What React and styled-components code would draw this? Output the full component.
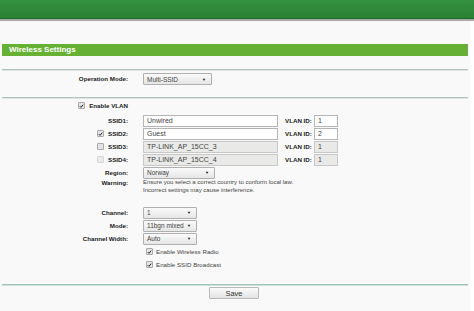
import styled, { createGlobalStyle } from "styled-components";

const GlobalStyle = createGlobalStyle`
    html, body {
        margin: 0;
        padding: 0;
        background: #ffffff;
        font-family: "Liberation Sans", Arial, sans-serif;
    }
`;

const Check = ({ checked, disabled }) => (
    <CheckBox $disabled={disabled}>
        {checked && (
            <svg width="6" height="6" viewBox="0 0 6 6">
                <path d="M1 3.2 L2.4 4.6 L5 1.4" fill="none" stroke="#222" strokeWidth="1.2" />
            </svg>
        )}
    </CheckBox>
);

const Select = ({ value, width }) => (
    <SelectBox $w={width}>
        <span>{value}</span>
        <Arrow>▼</Arrow>
    </SelectBox>
);

const ssids = [
    { label: "SSID1:", value: "Unwired", vlan: "1" },
    { label: "SSID2:", value: "Guest", vlan: "2", check: "on" },
    { label: "SSID3:", value: "TP-LINK_AP_15CC_3", vlan: "1", check: "off", disabled: true },
    { label: "SSID4:", value: "TP-LINK_AP_15CC_4", vlan: "1", check: "dis", disabled: true },
];

const App = () => {
    return (
        <Page>
            <GlobalStyle />
            <Header />
            <Content>
                <TitleBar>Wireless Settings</TitleBar>
                <Divider $mt={13} />
                <Row $mt={2} $h={14}>
                    <Label>Operation Mode:</Label>
                    <Select value="Multi-SSID" width={69} />
                </Row>
                <Divider $mt={11} />
                <Row $mt={1}>
                    <Label>
                        <Check checked />
                        Enable VLAN
                    </Label>
                </Row>
                <Spacer $h={2} />
                {ssids.map((s) => (
                    <Row key={s.label}>
                        <Label>
                            {s.check === "on" && <Check checked />}
                            {s.check === "off" && <Check />}
                            {s.check === "dis" && <Check disabled />}
                            {s.label}
                        </Label>
                        <TextInput $w={135} $disabled={s.disabled}>{s.value}</TextInput>
                        <VlanLabel>VLAN ID:</VlanLabel>
                        <TextInput $w={24} $disabled={s.disabled}>{s.vlan}</TextInput>
                    </Row>
                ))}
                <Row>
                    <Label>Region:</Label>
                    <Select value="Norway" width={72} />
                </Row>
                <Row $h={16} $top>
                    <Label>Warning:</Label>
                    <Note>
                        Ensure you select a correct country to conform local law.
                        <br />
                        Incorrect settings may cause interference.
                    </Note>
                </Row>
                <Spacer $h={11} />
                <Row>
                    <Label>Channel:</Label>
                    <Select value="1" width={54} />
                </Row>
                <Row>
                    <Label>Mode:</Label>
                    <Select value="11bgn mixed" width={54} />
                </Row>
                <Row>
                    <Label>Channel Width:</Label>
                    <Select value="Auto" width={54} />
                </Row>
                <Row>
                    <Label />
                    <Option>
                        <Check checked />
                        Enable Wireless Radio
                    </Option>
                </Row>
                <Row>
                    <Label />
                    <Option>
                        <Check checked />
                        Enable SSID Broadcast
                    </Option>
                </Row>
                <Divider $mt={13} $green />
                <Footer>
                    <SaveButton>Save</SaveButton>
                </Footer>
            </Content>
        </Page>
    );
};

const Page = styled.div`
    width: 474px;
    height: 311px;
    overflow: hidden;
    background: #fff;
`;

const Header = styled.div`
    width: 474px;
    height: 18px;
    background: linear-gradient(#34923f, #2a8235);
    border-bottom: 1px solid #1f6a2a;
    box-shadow: 0 2px 0 #a8aaa8;
`;

const Content = styled.div`
    width: 466px;
    height: 292px;
    margin-top: 2px;
    padding: 0 2px;
    background: #f9f9f9;
    overflow: hidden;
`;

const TitleBar = styled.div`
    margin-top: 23px;
    height: 12px;
    line-height: 12px;
    background: #66b134;
    border-right: 1px solid #7aa35a;
    color: #ffffff;
    font-weight: bold;
    font-size: 8px;
    padding-left: 7px;
`;

const Divider = styled.div`
    margin-top: ${(p) => p.$mt}px;
    height: 1px;
    background: ${(p) => (p.$green ? "#9fc4b5" : "#b2c4c0")};
    box-shadow: 0 1px 0 ${(p) => (p.$green ? "#cfe2da" : "#dde5e3")};
`;

const Spacer = styled.div`
    height: ${(p) => p.$h}px;
`;

const Row = styled.div`
    display: flex;
    align-items: ${(p) => (p.$top ? "flex-start" : "center")};
    height: ${(p) => p.$h || 13}px;
    margin-top: ${(p) => p.$mt || 0}px;
    font-size: 6px;
    color: #333;
`;

const Label = styled.div`
    width: 126px;
    flex-shrink: 0;
    padding-right: 15px;
    display: flex;
    align-items: center;
    justify-content: flex-end;
    gap: 3px;
    font-weight: bold;
    font-size: 6.2px;
    color: #1a1a1a;
    line-height: 8px;
    white-space: nowrap;
`;

const CheckBox = styled.span`
    width: 5px;
    height: 5px;
    border: 1px solid ${(p) => (p.$disabled ? "#d6d6d6" : "#a9a9a9")};
    border-radius: 1px;
    background: ${(p) => (p.$disabled ? "#ececec" : "#e4e4e4")};
    display: inline-flex;
    align-items: center;
    justify-content: center;
    margin-right: 1px;
    svg {
        display: block;
    }
`;

const TextInput = styled.div`
    width: ${(p) => p.$w}px;
    flex-shrink: 0;
    box-sizing: border-box;
    height: 12px;
    line-height: 10px;
    border: 1px solid ${(p) => (p.$disabled ? "#c8c8c8" : "#b5b5b5")};
    background: ${(p) => (p.$disabled ? "#e9e9e7" : "#ffffff")};
    padding-left: 3px;
    font-size: 7px;
    color: #444;
    white-space: nowrap;
`;

const VlanLabel = styled.div`
    margin-left: 7px;
    width: 29px;
    flex-shrink: 0;
    font-weight: bold;
    font-size: 6.2px;
    color: #1a1a1a;
    white-space: nowrap;
`;

const SelectBox = styled.div`
    width: ${(p) => p.$w}px;
    height: 12px;
    box-sizing: border-box;
    border: 1px solid #b0b0b0;
    border-radius: 1px;
    background: linear-gradient(#fafafa, #e6e6e6);
    display: flex;
    align-items: center;
    justify-content: space-between;
    padding: 0 5px 0 3px;
    font-size: 6.5px;
    color: #444;
    white-space: nowrap;
`;

const Arrow = styled.span`
    font-size: 4px;
    color: #111;
`;

const Note = styled.div`
    font-size: 6px;
    line-height: 8px;
    color: #444;
    margin-top: -1px;
    white-space: nowrap;
`;

const Option = styled.div`
    display: flex;
    align-items: center;
    margin-left: 3px;
    font-size: 6.2px;
    color: #444;
    gap: 2px;
    white-space: nowrap;
`;

const Footer = styled.div`
    display: flex;
    justify-content: center;
    margin-top: 2px;
    padding-right: 2px;
`;

const SaveButton = styled.button`
    width: 50px;
    height: 12px;
    padding: 0;
    border: 1px solid #b8b8b8;
    border-radius: 1px;
    background: linear-gradient(#fbfbfb, #e3e3e3);
    font-family: "Liberation Sans", Arial, sans-serif;
    font-size: 7.5px;
    color: #333;
`;

export default App;
